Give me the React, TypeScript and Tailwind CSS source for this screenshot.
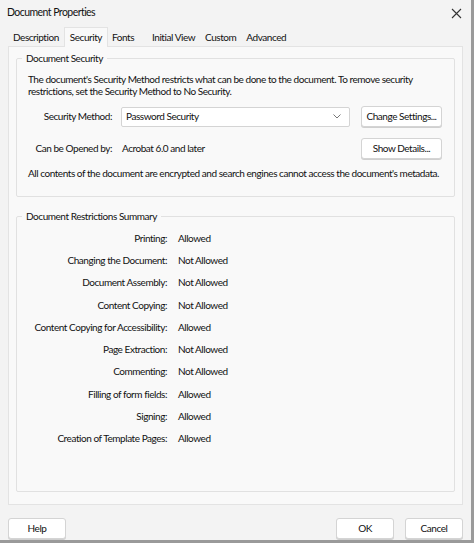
import React from "react";

const font = { fontFamily: 'Lato, "Liberation Sans", sans-serif' };

const tabs = ["Description", "Security", "Fonts", "Initial View", "Custom", "Advanced"];

const rows: [string, string][] = [
  ["Printing:", "Allowed"],
  ["Changing the Document:", "Not Allowed"],
  ["Document Assembly:", "Not Allowed"],
  ["Content Copying:", "Not Allowed"],
  ["Content Copying for Accessibility:", "Allowed"],
  ["Page Extraction:", "Not Allowed"],
  ["Commenting:", "Not Allowed"],
  ["Filling of form fields:", "Allowed"],
  ["Signing:", "Allowed"],
  ["Creation of Template Pages:", "Allowed"],
];

function Btn({ children, className = "" }: { children: React.ReactNode; className?: string }) {
  return (
    <div
      className={
        "flex h-[21px] shrink-0 items-center justify-center whitespace-nowrap rounded-[3px] border border-[#d4d4d4] bg-white text-[#111] shadow-[0_1px_0_#cfcfcf] " +
        className
      }
    >
      {children}
    </div>
  );
}

export default function App() {
  return (
    <div className="h-[543px] w-[474px] overflow-hidden bg-[#9a9a9a] text-[10px] tracking-[-0.45px]" style={font}>
      <div className="flex h-[540px] w-[471px] flex-col bg-[#f3f3f3] text-[#111]">
        {/* title bar */}
        <div className="flex h-[26px] items-center justify-between pl-[7px] pr-[9px]">
          <span className="text-[10.5px] tracking-[-0.55px]">Document Properties</span>
          <svg width="11" height="11" viewBox="0 0 11 11" className="text-[#333]">
            <path d="M1 1L10 10M10 1L1 10" stroke="currentColor" strokeWidth="1.1" />
          </svg>
        </div>

        {/* tabs */}
        <div className="flex h-[20px] items-end pl-[8px]">
          {tabs.map((t) => (
            <div
              key={t}
              className={
                t === "Security"
                  ? "z-10 -mb-px flex h-[20px] items-center border border-b-0 border-[#e3e3e3] bg-[#f9f9f9] px-[5px]"
                  : t === "Fonts"
                  ? "flex h-[18px] w-[39px] items-center pl-[4px]"
                  : "flex h-[18px] items-center px-[5px]"
              }
            >
              {t}
            </div>
          ))}
        </div>

        {/* panel */}
        <div className="mx-[8px] flex h-[459px] flex-col gap-[12px] border border-[#e3e3e3] bg-[#f9f9f9] px-[7px] pt-[4px]">
          <fieldset className="h-[146px] rounded-[2px] border border-[#e1e1e1] px-[11px] pb-0">
            <legend className="ml-[-6px] px-[4px]">Document Security</legend>
            <p className="mt-[7px] leading-[12px]">
              The document's Security Method restricts what can be done to the document. To remove security
              restrictions, set the Security Method to No Security.
            </p>
            <div className="mt-[9px] flex items-center whitespace-nowrap">
              <span className="w-[84px] shrink-0 text-right">Security Method:</span>
              <div className="ml-[9px] flex h-[20px] w-[229px] shrink-0 items-center justify-between rounded-[2px] border border-[#d4d4d4] bg-white pl-[4px] pr-[8px]">
                <span>Password Security</span>
                <svg width="8" height="5" viewBox="0 0 8 5">
                  <path d="M0.5 0.5L4 4L7.5 0.5" stroke="#777" fill="none" strokeWidth="1" />
                </svg>
              </div>
              <Btn className="ml-[11px] w-[81px]">Change Settings...</Btn>
            </div>
            <div className="mt-[11px] flex items-center whitespace-nowrap">
              <span className="w-[84px] shrink-0 text-right">Can be Opened by:</span>
              <span className="ml-[9px] w-[229px] shrink-0 pl-[1px]">Acrobat 6.0 and later</span>
              <Btn className="ml-[11px] w-[81px]">Show Details...</Btn>
            </div>
            <p className="mt-[7px] whitespace-nowrap">
              All contents of the document are encrypted and search engines cannot access the document's metadata.
            </p>
          </fieldset>

          <fieldset className="h-[283px] rounded-[2px] border border-[#e1e1e1] px-[11px]">
            <legend className="ml-[-6px] px-[4px]">Document Restrictions Summary</legend>
            <div className="mt-[3px] flex flex-col whitespace-nowrap">
              {rows.map(([k, v]) => (
                <div key={k} className="flex h-[22.3px] items-center">
                  <span className="w-[139px] shrink-0 text-right">{k}</span>
                  <span className="ml-[11px]">{v}</span>
                </div>
              ))}
            </div>
          </fieldset>
        </div>

        {/* footer */}
        <div className="mt-[13px] flex items-center px-[8px]">
          <Btn className="w-[58px]">Help</Btn>
          <div className="flex-1" />
          <Btn className="w-[58px] border-[#5a8fc4] shadow-[0_1px_0_#8fb3d9]">OK</Btn>
          <Btn className="ml-[11px] w-[58px]">Cancel</Btn>
        </div>
      </div>
    </div>
  );
}
